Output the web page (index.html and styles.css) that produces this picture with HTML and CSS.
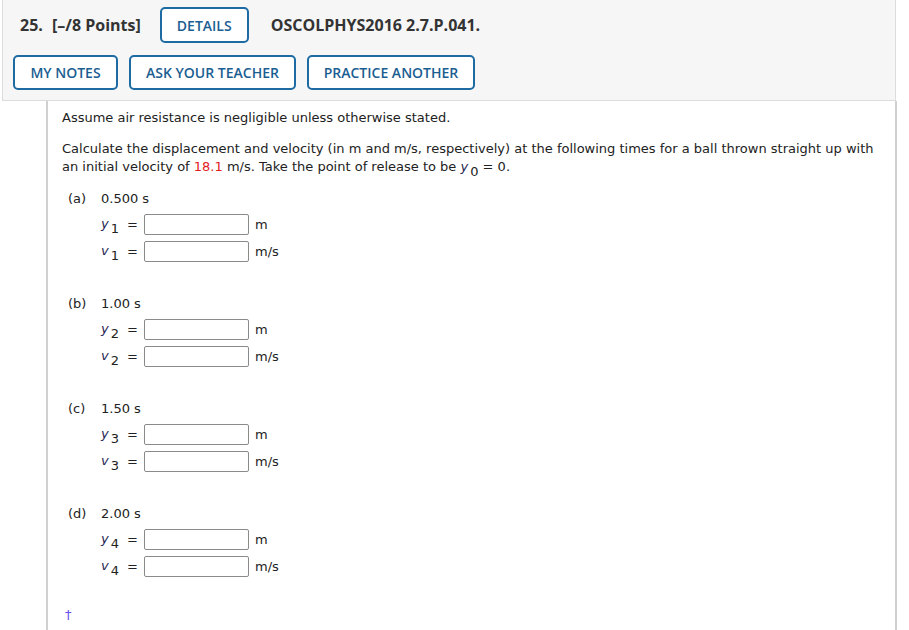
FILE: index.html
```html
<!DOCTYPE html>
<html>
<head>
<meta charset="utf-8">
<link rel="stylesheet" href="styles.css">
</head>
<body>
<div class="header">
  <div class="row1">
    <span class="qnum">25.</span>
    <span class="points">[–/8 Points]</span>
    <button class="btn details">DETAILS</button>
    <span class="code">OSCOLPHYS2016 2.7.P.041.</span>
  </div>
  <div class="row2">
    <button class="btn">MY NOTES</button>
    <button class="btn">ASK YOUR TEACHER</button>
    <button class="btn">PRACTICE ANOTHER</button>
  </div>
</div>
<div class="content">
  <p class="p1">Assume air resistance is negligible unless otherwise stated.</p>
  <p class="p2">Calculate the displacement and velocity (in m and m/s, respectively) at the following times for a ball thrown straight up with an initial velocity of <span class="red">18.1</span> m/s. Take the point of release to be <i class="var">y</i><sub>0</sub> = 0.</p>

  <div class="part">
    <div class="ptitle"><span class="plabel">(a)</span><span>0.500 s</span></div>
    <div class="arow"><span class="lab"><i class="var">y</i><sub>1</sub></span><span class="eq">=</span><span class="inp"></span><span class="unit">m</span></div>
    <div class="arow"><span class="lab"><i class="var">v</i><sub>1</sub></span><span class="eq">=</span><span class="inp"></span><span class="unit">m/s</span></div>
  </div>
  <div class="part">
    <div class="ptitle"><span class="plabel">(b)</span><span>1.00 s</span></div>
    <div class="arow"><span class="lab"><i class="var">y</i><sub>2</sub></span><span class="eq">=</span><span class="inp"></span><span class="unit">m</span></div>
    <div class="arow"><span class="lab"><i class="var">v</i><sub>2</sub></span><span class="eq">=</span><span class="inp"></span><span class="unit">m/s</span></div>
  </div>
  <div class="part">
    <div class="ptitle"><span class="plabel">(c)</span><span>1.50 s</span></div>
    <div class="arow"><span class="lab"><i class="var">y</i><sub>3</sub></span><span class="eq">=</span><span class="inp"></span><span class="unit">m</span></div>
    <div class="arow"><span class="lab"><i class="var">v</i><sub>3</sub></span><span class="eq">=</span><span class="inp"></span><span class="unit">m/s</span></div>
  </div>
  <div class="part last">
    <div class="ptitle"><span class="plabel">(d)</span><span>2.00 s</span></div>
    <div class="arow"><span class="lab"><i class="var">y</i><sub>4</sub></span><span class="eq">=</span><span class="inp"></span><span class="unit">m</span></div>
    <div class="arow"><span class="lab"><i class="var">v</i><sub>4</sub></span><span class="eq">=</span><span class="inp"></span><span class="unit">m/s</span></div>
  </div>
  <div class="dagger">†</div>
</div>
</body>
</html>
```
FILE: styles.css
```css
html, body { margin: 0; padding: 0; background: #fff; }
body { font-family: "DejaVu Sans", Verdana, sans-serif; color: #222; }
.header {
  margin-left: 2px;
  width: 892px;
  background: #f6f6f6;
  border: 1px solid #dcdcdc;
  border-top: none;
  padding: 7px 0 10px 0;
  font-family: "Open Sans", sans-serif;
}
.row1 { display: flex; align-items: center; height: 36px; }
.qnum { font-weight: 700; font-size: 16px; color: #333; margin-left: 17px; width: 32px; }
.points { font-weight: 700; font-size: 16px; color: #333; }
.code { font-weight: 700; font-size: 16px; color: #333; margin-left: 22px; }
.btn {
  font-family: "Open Sans", sans-serif;
  font-weight: 600;
  font-size: 14px;
  color: #1b5e92;
  background: #fff;
  border: 2px solid #1e6aa3;
  border-radius: 5px;
  height: 36px;
  padding: 0;
  box-sizing: border-box;
  white-space: nowrap;
}
.details { margin-left: 19px; width: 89px; }
.row2 { display: flex; gap: 11px; margin-top: 12px; margin-left: 10px; }
.row2 .btn { height: 35px; }
.row2 .btn:nth-child(1) { width: 105px; }
.row2 .btn:nth-child(2) { width: 167px; }
.row2 .btn:nth-child(3) { width: 168px; }
.content {
  margin-left: 46px;
  border-left: 2px solid #d0d0d0;
  border-right: 2px solid #d0d0d0;
  padding: 8px 16px 0 14px;
  box-sizing: border-box;
  width: 851px;
  font-size: 13px;
  line-height: 18px;
  height: 530px;
}
.p1 { margin: 0; }
.p2 { margin: 13px 0 0 0; }
.red { color: #e31b1b; }
.var { color: #2a2a55; font-style: italic; }
sub { font-size: 13px; vertical-align: -5px; line-height: 0; margin-left: 2px; }
.part { margin-left: 6px; height: 105px; }
.part:first-of-type { margin-top: 14px; }
.part.last { height: 101px; }
.ptitle { display: flex; height: 18px; }
.plabel { width: 33px; }
.arow { display: flex; align-items: center; margin-left: 33px; height: 21px; }
.arow + .arow { margin-top: 6px; }
.ptitle + .arow { margin-top: 6px; }
.lab { width: 26px; position: relative; top: -1px; }
.eq { width: 17px; }
.inp { width: 105px; height: 21px; box-sizing: border-box; border: 1px solid #8a8a8a; border-radius: 2px; background: #fff; }
.unit { margin-left: 6px; }
.dagger { color: #6a4ff0; margin-left: 3px; }
```
